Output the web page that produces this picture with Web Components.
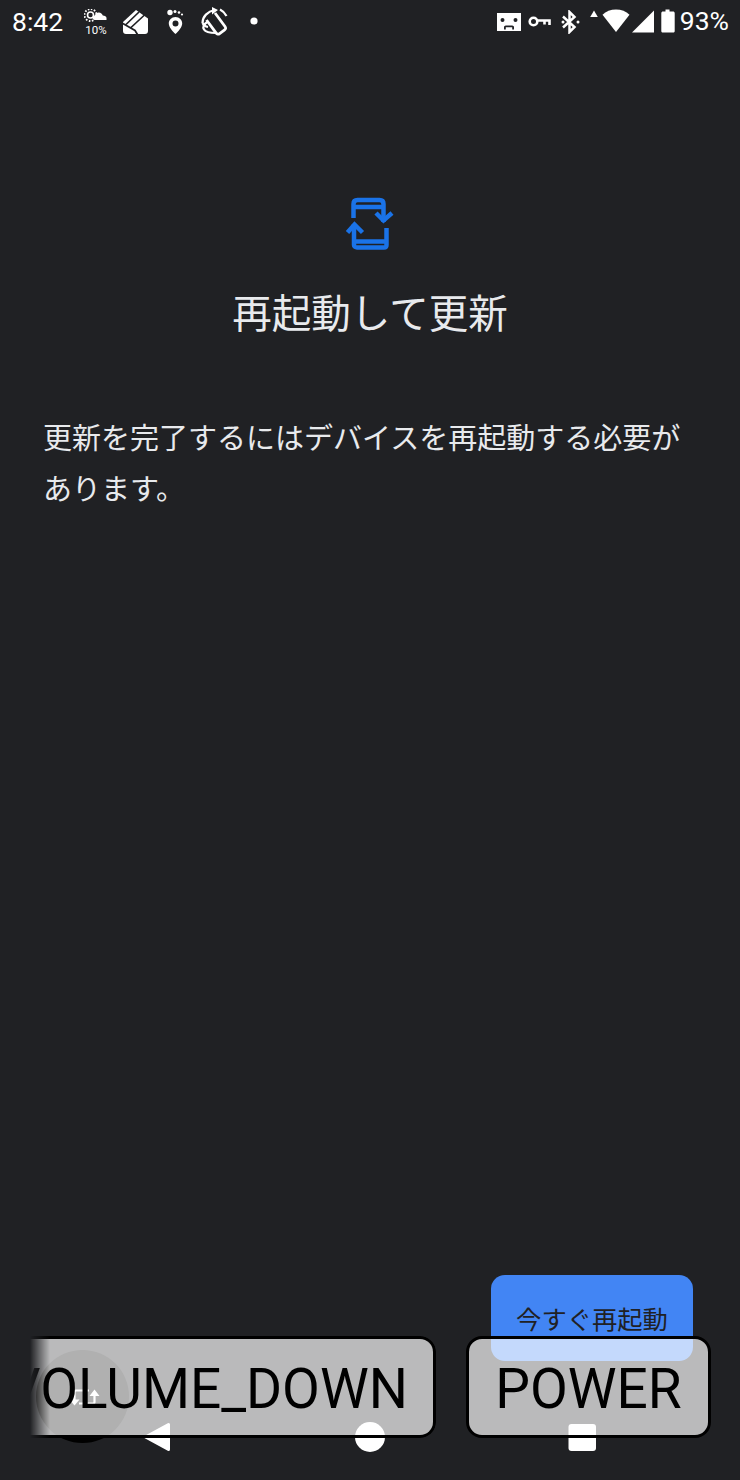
<!DOCTYPE html>
<html lang="ja">
<head>
<meta charset="utf-8">
<title>再起動して更新</title>
<style>
  html, body { margin: 0; padding: 0; background: #202124; }
  body { width: 740px; height: 1480px; overflow: hidden; font-family: Roboto, "Noto Sans CJK JP", sans-serif; }
</style>
</head>
<body>
<update-screen>
  <status-bar slot="status"></status-bar>
  <update-panel></update-panel>
  <nav-bar slot="nav"></nav-bar>
</update-screen>
<float-ball></float-ball>
<key-overlay></key-overlay>

<script>
class StatusBar extends HTMLElement {
  constructor() {
    super();
    this.attachShadow({ mode: "open" });
    this.shadowRoot.innerHTML = `
      <style>
        :host { display: flex; align-items: flex-start; height: 48px; color: #fff; font-family: Roboto, sans-serif; }
        svg { display: block; flex: none; }
        .time { font-size: 26.5px; line-height: 29px; margin: 7px 0 0 12px; width: 72px; }
        .weather { width: 24px; height: 36px; margin-top: 9px; }
        .weather span { display: block; font-size: 11.5px; line-height: 12px; margin-top: 0; text-align: center; }
        .spacer { flex: 1; }
        .pct { font-size: 26.5px; line-height: 30px; margin: 6px 11px 0 4px; }
      </style>
      <div class="time">8:42</div>
      <div class="weather">
        <svg viewBox="84 9 24 15" width="24" height="15">
          <circle cx="90.500" cy="15" r="3" fill="none" stroke="#fff" stroke-width="1.600"/>
          <circle cx="90.500" cy="15" r="6" fill="none" stroke="#fff" stroke-width="1.800" stroke-dasharray="1.600 1.500"/>
          <path fill="#fff" d="M95 20c-1.800 0-2.600-1.400-2.400-2.600.2-1.200 1.200-1.900 2.300-1.800.4-2 2-3.200 3.900-3.200 2 0 3.600 1.300 4 3.200 2 0 3.700 1 3.700 2.400v2z"/>
        </svg>
        <span>10%</span>
      </div>
      <svg viewBox="120 8 30 28" width="30" height="28" style="margin:8px 0 0 12px">
        <path fill="#fff" d="M123 22L136 10l12 8.500V31c0 1.800-1.200 3-3 3h-19c-1.800 0-3-1.200-3-3z"/>
        <g fill="none" stroke="#202124" stroke-width="1.700">
          <path d="M126 24.500l13-12.500M131 27.500L144.500 15M122 23l13 7.500 2.500 4"/>
        </g>
      </svg>
      <svg viewBox="164 8 22 28" width="22" height="28" style="margin:8px 0 0 14px">
        <path fill="#fff" fill-rule="evenodd" d="M175.500 17c4 0 6.700 3 6.700 6.500 0 3.500-3.700 7.800-6.700 10.500-3-2.700-6.700-7-6.700-10.500 0-3.500 2.700-6.500 6.700-6.500zm0 3.600a3 3 0 1 0 0 6 3 3 0 0 0 0-6z"/>
        <ellipse cx="170" cy="12.500" rx="2.700" ry="2.800" fill="#fff"/>
        <circle cx="175" cy="11.500" r="1.500" fill="#fff"/>
        <circle cx="179" cy="12.500" r="1.300" fill="#fff"/>
        <circle cx="182" cy="14.500" r="1.100" fill="#fff"/>
      </svg>
      <svg viewBox="199 7 32 29" width="32" height="29" style="margin:7px 0 0 13px">
        <path d="M215 13l10 13.500c1 1.300.8 2.500-.4 3.400l-5 3.700c-1.200.9-2.500.7-3.400-.5L206.500 20" fill="none" stroke="#fff" stroke-width="2.800"/>
        <g fill="none" stroke="#fff" stroke-width="2.200">
          <path d="M202.500 23c0-6.500 5-11.500 12.500-13"/>
          <path d="M220 9.500c3 1.500 5 3.500 6.500 6.500"/>
          <path d="M208 21.500c-4 2.500-5.500 5.500-4 8 1.500 2.500 6 3.500 12 3.500"/>
          <path d="M202.500 23c1 2 3 3.500 5.500 4"/>
        </g>
        <path fill="#fff" d="M212 7l6 3-6 4.500z"/>
      </svg>
      <svg viewBox="249 16 10 10" width="10" height="10" style="margin:16px 0 0 18px">
        <circle cx="254" cy="21" r="3.600" fill="#fff"/>
      </svg>
      <div class="spacer"></div>
      <svg viewBox="498 12 26 20" width="26" height="20" style="margin-top:12px">
        <path fill="#fff" fill-rule="evenodd" d="M499 13h24v18h-24zM504.500 18a2 2 0 1 0 0 4 2 2 0 0 0 0-4zm13 0a2 2 0 1 0 0 4 2 2 0 0 0 0-4zM506 29.500v-2.200c0-1 .8-1.800 1.800-1.800h6.400c1 0 1.800.8 1.800 1.800v2.200h-1.800v-2.200h-6.400v2.200z"/>
      </svg>
      <svg viewBox="529 15 26 14" width="26" height="14" style="margin:15px 0 0 5px">
        <circle cx="535.500" cy="21.500" r="3.800" fill="none" stroke="#fff" stroke-width="2.600"/>
        <path fill="none" stroke="#fff" stroke-width="2.600" d="M539.500 20.500h12v4.500M546.500 21v3.500"/>
      </svg>
      <svg viewBox="562 10 22 24" width="22" height="24" style="margin:10px 0 0 7px">
        <path fill="none" stroke="#fff" stroke-width="2.500" d="M565 16.500l11.500 10.500-5 5V12l5 5L565 27.500"/>
        <circle cx="565" cy="22" r="1.500" fill="#fff"/>
        <circle cx="580" cy="22" r="1.500" fill="#fff"/>
      </svg>
      <svg viewBox="592 10 8 8" width="8" height="8" style="margin:10px 0 0 8px">
        <path fill="#fff" d="M596 10.500l3.800 6.500h-7.600z"/>
      </svg>
      <svg viewBox="603 9 29 24" width="29" height="24" style="margin:9px 0 0 3px">
        <path fill="#fff" d="M618 9.500c5.300 0 10 1.900 13.500 5.200L618 32 604.500 14.700C608 11.400 612.700 9.500 618 9.500z"/>
      </svg>
      <svg viewBox="633 10 24 23" width="24" height="23" style="margin:10px 0 0 1px">
        <path fill="#fff" d="M656 10.500v22h-22z"/>
      </svg>
      <svg viewBox="662 9 16 24" width="16" height="24" style="margin:9px 0 0 5px">
        <path fill="#fff" d="M667.500 9.500h4v2h3.500c1 0 1.700.7 1.700 1.700v17.700c0 1-.7 1.600-1.700 1.600h-10c-1 0-1.700-.6-1.700-1.600V13.200c0-1 .7-1.700 1.700-1.700h2.500z"/>
      </svg>
      <div class="pct">93%</div>
    `;
  }
}

class UpdateScreen extends HTMLElement {
  constructor() {
    super();
    this.attachShadow({ mode: "open" });
    this.shadowRoot.innerHTML = `
      <style>
        :host { display: flex; flex-direction: column; width: 740px; height: 1480px; background: #202124; }
        .main { flex: 1; display: flex; flex-direction: column; min-height: 0; }
      </style>
      <slot name="status"></slot>
      <div class="main"><slot></slot></div>
      <slot name="nav"></slot>
    `;
  }
}

class UpdatePanel extends HTMLElement {
  constructor() {
    super();
    this.attachShadow({ mode: "open" });
    this.shadowRoot.innerHTML = `
      <style>
        :host { display: flex; flex-direction: column; flex: 1; font-family: "Noto Sans CJK JP", sans-serif; }
        svg { display: block; margin: 148px auto 0; }
        h1 { margin: 32px 0 0; font-size: 39.500px; line-height: 54px; font-weight: 400; color: #e8eaed; text-align: center; }
        p { margin: 73px 44px 0 43px; font-size: 29px; line-height: 51px; color: #e8eaed; }
        .actions { margin-top: auto; padding: 0 47px 60px 0; display: flex; justify-content: flex-end; }
      </style>
      <svg viewBox="345 196 50 56" width="50" height="56">
        <g fill="none" stroke="#1a73e8" stroke-width="4.500">
          <path d="M353.500 218v-14c0-2.500 1.500-4 4-4h22c2.500 0 4 1.500 4 4v18"/>
          <path d="M354 224v21c0 1.500 1.500 2.500 3 2.500h27c1.500 0 2.500-1 2.500-2.500v-17"/>
          <path d="M354 207h29M355 241.500h30"/>
          <path d="M376 213l7.500 7.500 8.500-7.500"/>
          <path d="M347.500 232.500l7-8 8 8"/>
        </g>
      </svg>
      <h1>再起動して更新</h1>
      <p>更新を完了するにはデバイスを再起動する必要があります。</p>
      <div class="actions"><restart-button>今すぐ再起動</restart-button></div>
    `;
  }
}

class RestartButton extends HTMLElement {
  constructor() {
    super();
    this.attachShadow({ mode: "open" });
    this.shadowRoot.innerHTML = `
      <style>
        :host { display: block; width: 202px; height: 86px; border-radius: 14px; background: #4285f4; color: #202124; font-family: "Noto Sans CJK JP", sans-serif; }
        div { padding-top: 25px; font-size: 25.300px; line-height: 36px; text-align: center; }
      </style>
      <div><slot></slot></div>
    `;
  }
}

class NavBar extends HTMLElement {
  constructor() {
    super();
    this.attachShadow({ mode: "open" });
    this.shadowRoot.innerHTML = `
      <style>
        :host { display: flex; height: 59px; padding-left: 143px; align-items: flex-start; }
        svg { display: block; flex: none; }
      </style>
      <svg viewBox="143 1421 29 32" width="29" height="32">
        <path fill="#fff" stroke="#fff" stroke-width="3" stroke-linejoin="round" d="M168.500 1424.500v25l-23-12.500z"/>
      </svg>
      <svg viewBox="354 1421 32 32" width="32" height="32" style="margin-left:182px">
        <circle cx="370" cy="1437" r="15" fill="#fff"/>
      </svg>
      <svg viewBox="567 1423 30 29" width="30" height="29" style="margin:2px 0 0 181px">
        <rect x="568.500" y="1424" width="27.500" height="27" rx="3" fill="#fff"/>
      </svg>
    `;
  }
}

class FloatBall extends HTMLElement {
  constructor() {
    super();
    this.attachShadow({ mode: "open" });
    this.shadowRoot.innerHTML = `
      <style>
        :host { position: absolute; left: 36px; top: 1350px; width: 93px; height: 93px; border-radius: 50%; background: #000; display: flex; align-items: center; justify-content: center; }
        svg { display: block; }
      </style>
      <svg viewBox="0 0 35 20" width="35" height="20">
        <g fill="none" stroke="#fff" stroke-width="2.200">
          <path d="M9.500 13V5c0-1 .5-1.500 1.500-1.500h13"/>
          <path d="M14 16.500h14c1 0 1.500-.5 1.500-1.500V8"/>
        </g>
        <path fill="#fff" d="M4.500 12.500h10l-5 6zM24.500 9l5-6.500 5 6.500z"/>
      </svg>
    `;
  }
}

class KeyCap extends HTMLElement {
  constructor() {
    super();
    this.attachShadow({ mode: "open" });
    this.shadowRoot.innerHTML = `
      <style>
        :host { display: flex; align-items: center; justify-content: center; box-sizing: border-box; height: 102px; padding-top: 4px; border: 3px solid #000; border-radius: 16px; background: rgba(255, 255, 255, .69); overflow: hidden; color: #000; font-family: Roboto, sans-serif; font-size: 55px; white-space: nowrap; }
      </style>
      <slot></slot>
    `;
  }
}

class KeyOverlay extends HTMLElement {
  constructor() {
    super();
    this.attachShadow({ mode: "open" });
    this.shadowRoot.innerHTML = `
      <style>
        :host { position: absolute; left: 0; top: 1336px; width: 740px; display: flex; gap: 30px; padding-left: 30px; box-sizing: border-box; }
        .vol { width: 406px; justify-content: flex-end; padding-right: 25px; box-sizing: border-box; -webkit-mask-image: linear-gradient(to right, transparent, #000 20px); mask-image: linear-gradient(to right, transparent, #000 20px); border-top-left-radius: 0; border-bottom-left-radius: 0; border-left: 0; }
        .pow { width: 245px; }
      </style>
      <key-cap class="vol">VOLUME_DOWN</key-cap>
      <key-cap class="pow">POWER</key-cap>
    `;
  }
}

customElements.define("status-bar", StatusBar);
customElements.define("update-screen", UpdateScreen);
customElements.define("update-panel", UpdatePanel);
customElements.define("restart-button", RestartButton);
customElements.define("nav-bar", NavBar);
customElements.define("float-ball", FloatBall);
customElements.define("key-cap", KeyCap);
customElements.define("key-overlay", KeyOverlay);
</script>
</body>
</html>
